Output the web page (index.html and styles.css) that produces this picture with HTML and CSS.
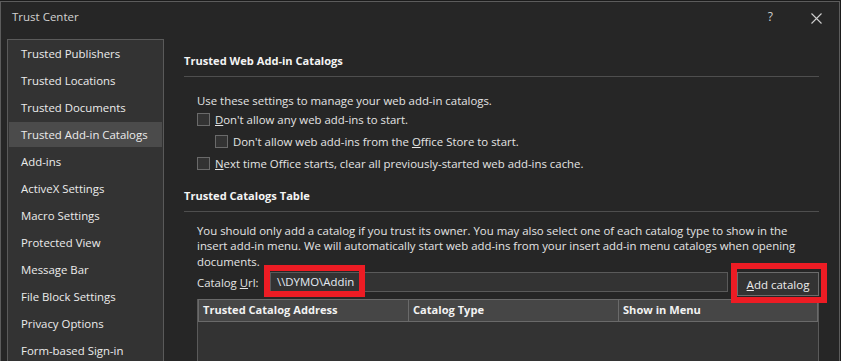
FILE: index.html
```html
<!DOCTYPE html>
<html lang="en">
<head>
    <meta charset="UTF-8">
    <meta name="viewport" content="width=device-width, initial-scale=1.0">
    <title>Trust Center</title>
    <link rel="stylesheet" href="styles.css">
</head>
<body>
    <div class="window">
        <header class="titlebar">
            <span class="title">Trust Center</span>
            <div class="title-buttons">
                <span class="help">?</span>
                <span class="close">
                    <svg width="11" height="11" viewBox="0 0 11 11">
                        <path d="M0.5 0.5 L10.5 10.5 M10.5 0.5 L0.5 10.5" stroke="#cfcfcf" stroke-width="1.1" fill="none"/>
                    </svg>
                </span>
            </div>
        </header>
        <div class="dialog-body">
            <nav class="sidebar">
                <a class="nav-item">Trusted Publishers</a>
                <a class="nav-item">Trusted Locations</a>
                <a class="nav-item">Trusted Documents</a>
                <a class="nav-item active">Trusted Add-in Catalogs</a>
                <a class="nav-item">Add-ins</a>
                <a class="nav-item">ActiveX Settings</a>
                <a class="nav-item">Macro Settings</a>
                <a class="nav-item">Protected View</a>
                <a class="nav-item">Message Bar</a>
                <a class="nav-item">File Block Settings</a>
                <a class="nav-item">Privacy Options</a>
                <a class="nav-item">Form-based Sign-in</a>
            </nav>
            <main class="content">
                <section class="section">
                    <h2 class="section-title">Trusted Web Add-in Catalogs</h2>
                    <div class="section-body web-catalogs">
                        <p class="intro">Use these settings to manage your web add-in catalogs.</p>
                        <label class="check"><span class="box"></span><span><u>D</u>on't allow any web add-ins to start.</span></label>
                        <label class="check sub"><span class="box"></span><span>Don't allow web add-ins from the <u>O</u>ffice Store to start.</span></label>
                        <label class="check"><span class="box"></span><span><u>N</u>ext time Office starts, clear all previously-started web add-ins cache.</span></label>
                    </div>
                </section>
                <section class="section second">
                    <h2 class="section-title">Trusted Catalogs Table</h2>
                    <div class="section-body">
                        <p class="notice">You should only add a catalog if you trust its owner. You may also select one of each catalog type to show in the<br>insert add-in menu. We will automatically start web add-ins from your insert add-in menu catalogs when opening<br>documents.</p>
                        <div class="url-row">
                            <span class="url-label">Catalog <u>U</u>rl:</span>
                            <div class="url-field">
                                <span class="url-value">\\DYMO\Addin</span>
                                <span class="mark mark-url"></span>
                            </div>
                            <div class="add-wrap">
                                <button class="add-button"><u>A</u>dd catalog</button>
                                <span class="mark mark-add"></span>
                            </div>
                        </div>
                        <div class="catalog-table">
                            <div class="table-head">
                                <div class="th col-address">Trusted Catalog Address</div>
                                <div class="th col-type">Catalog Type</div>
                                <div class="th col-menu">Show in Menu</div>
                            </div>
                            <div class="table-rows"></div>
                        </div>
                    </div>
                </section>
            </main>
        </div>
    </div>
</body>
</html>
```

FILE: styles.css
```css
* {
    margin: 0;
    padding: 0;
    box-sizing: border-box;
}
body {
    font-family: "Open Sans", "Liberation Sans", sans-serif;
    font-size: 11.4px;
    color: #e4e4e4;
    background-color: #1b1b1b;
    width: 841px;
    height: 361px;
    overflow: hidden;
    padding-top: 1px;
}
.window {
    width: 840px;
    height: 400px;
    background-color: #262626;
    border: 1px solid #5c5c5c;
    display: flex;
    flex-direction: column;
}
.titlebar {
    height: 37px;
    display: flex;
    align-items: flex-start;
    justify-content: space-between;
    padding: 7px 17px 0 11px;
    flex-shrink: 0;
}
.title {
    line-height: 16px;
    font-size: 11.5px;
    color: #d2d2d2;
}
.title-buttons {
    display: flex;
    align-items: center;
    gap: 38px;
    height: 16px;
}
.help {
    font-size: 12px;
    color: #cfcfcf;
    line-height: 16px;
}
.close {
    display: flex;
    margin-top: 2px;
}
.dialog-body {
    display: flex;
    flex: 1;
}
.sidebar {
    width: 157px;
    margin-left: 6px;
    background-color: #333333;
    border: 1px solid #5a5a5a;
    padding: 0 1px;
    display: flex;
    flex-direction: column;
    flex-shrink: 0;
}
.nav-item {
    display: block;
    height: 25px;
    line-height: 25px;
    margin: 1px 0;
    padding-left: 12px;
    color: #ececec;
    white-space: nowrap;
}
.nav-item.active {
    background-color: #4b4b4b;
}
.content {
    flex: 1;
    padding: 14px 20px 0 20px;
}
.section-title {
    font-size: 11.1px;
    font-weight: bold;
    color: #f4f4f4;
    line-height: 16px;
    padding-bottom: 7px;
    border-bottom: 1px solid #4e4e4e;
}
.section-body {
    padding-left: 13px;
}
.intro {
    margin-top: 16px;
    line-height: 15px;
}
.check {
    display: flex;
    align-items: center;
    gap: 5px;
    height: 22px;
    white-space: nowrap;
}
.check.sub {
    padding-left: 18px;
}
.box {
    width: 13px;
    height: 13px;
    background-color: #333333;
    border: 1px solid #6a6a6a;
    flex-shrink: 0;
}
.section.second {
    margin-top: 14px;
}
.notice {
    margin-top: 11px;
    line-height: 15.3px;
    white-space: nowrap;
}
.url-row {
    display: flex;
    align-items: flex-start;
    margin-top: 3px;
    height: 24px;
}
.url-label {
    width: 73px;
    line-height: 21px;
    flex-shrink: 0;
}
.url-field {
    position: relative;
    width: 458px;
    height: 20px;
    background-color: #333333;
    border: 1px solid #5a5a5a;
    padding-left: 6px;
    line-height: 18px;
    color: #e6ecf4;
}
.add-wrap {
    position: relative;
    margin-left: 9px;
}
.add-button {
    width: 82px;
    height: 24px;
    background-color: #333333;
    border: 1px solid #6b6b6b;
    color: #ececec;
    font-family: inherit;
    font-size: 11.5px;
    padding-top: 1px;
}
.mark {
    position: absolute;
    border: 6px solid #ed1c24;
}
.mark-url {
    left: -7px;
    top: -8px;
    width: 101px;
    height: 32px;
}
.mark-add {
    left: -6px;
    top: -9px;
    width: 96px;
    height: 40px;
}
.catalog-table {
    margin-top: 3px;
    width: 622px;
    background-color: #333333;
    border: 1px solid #5a5a5a;
    border-top: none;
}
.table-head {
    display: flex;
    height: 23px;
}
.th {
    background-color: #464646;
    border: 1px solid #6a6a6a;
    font-weight: bold;
    font-size: 11.1px;
    color: #f2f2f2;
    padding-left: 4px;
    line-height: 20px;
    white-space: nowrap;
}
.col-address {
    width: 211px;
}
.col-type {
    width: 210px;
    border-left: none;
}
.col-menu {
    flex: 1;
    border-left: none;
}
.table-rows {
    height: 80px;
}
```
